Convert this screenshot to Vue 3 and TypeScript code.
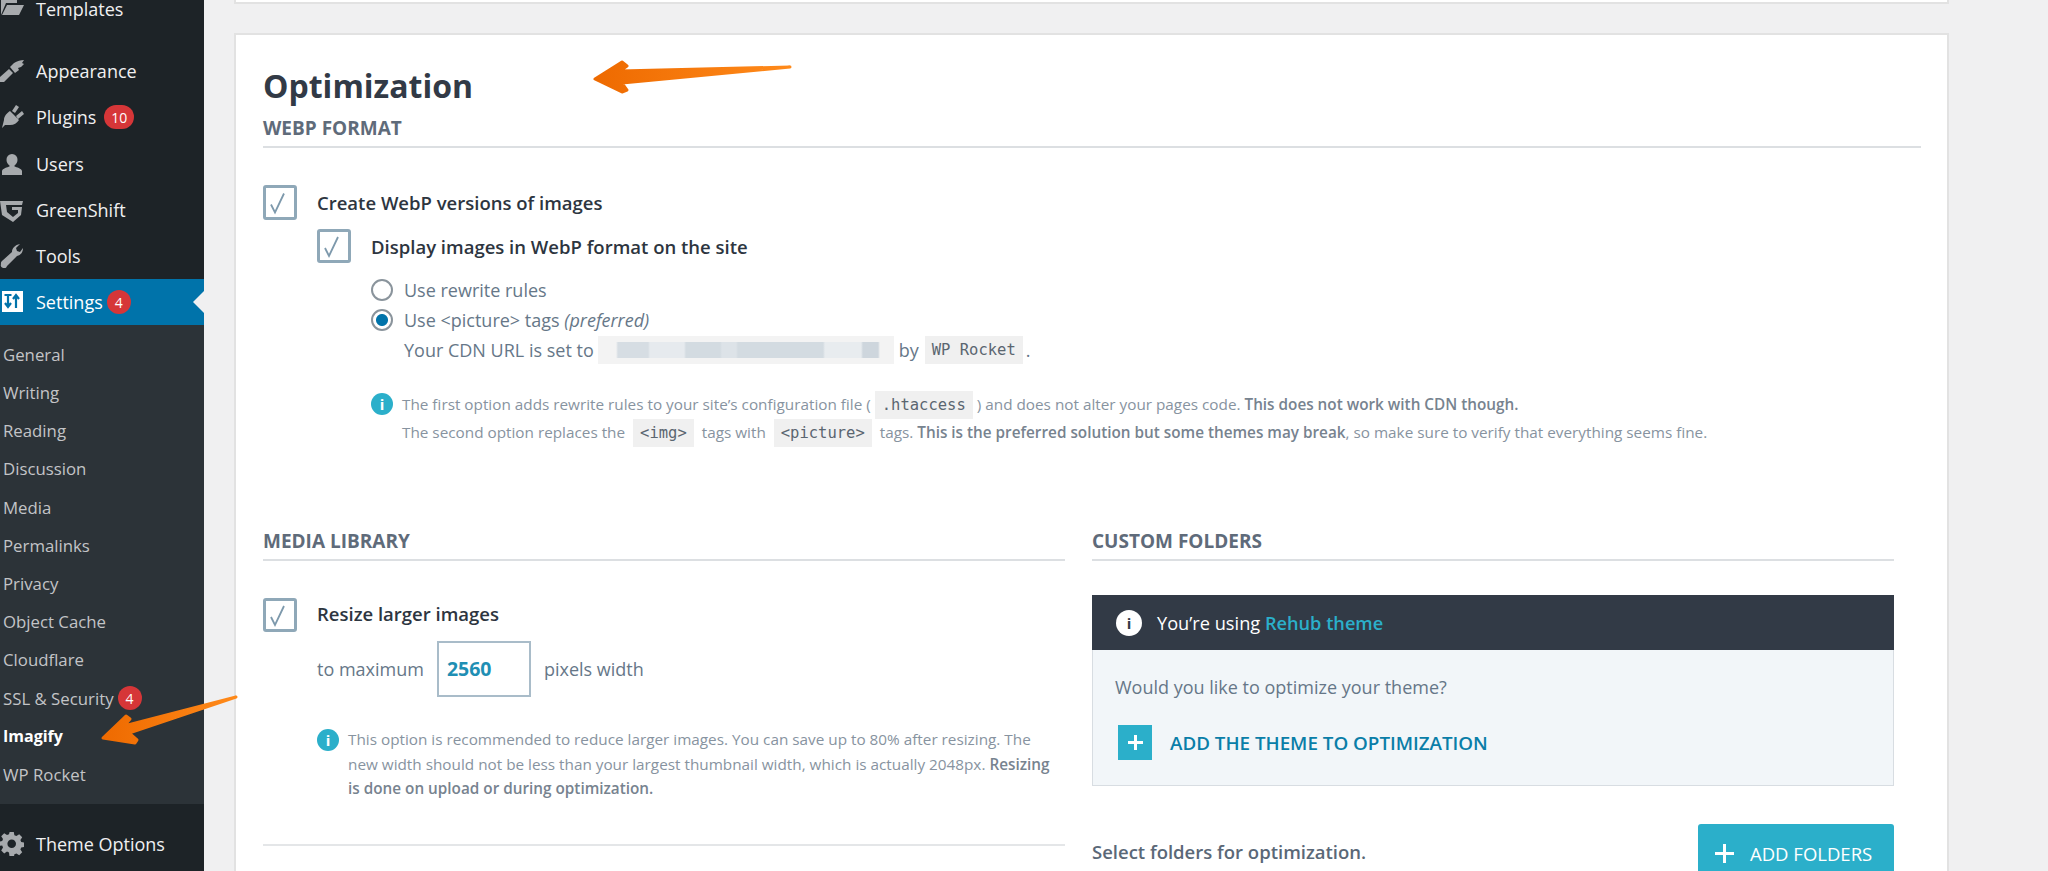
<template>
  <div class="page">
    <!-- admin menu -->
    <aside class="sidebar">
      <a v-for="item in topItems" :key="item.label" class="menu-item" :class="{ current: item.current, gap: item.gap }">
        <svg class="menu-icon" viewBox="0 0 24 24" v-html="item.icon"></svg>
        <span>{{ item.label }}</span>
        <b v-if="item.badge" class="badge" :class="{ wide: item.badge > 9 }">{{ item.badge }}</b>
      </a>
      <div class="submenu">
        <a v-for="sub in subItems" :key="sub.label" class="sub-item" :class="{ active: sub.active }">
          {{ sub.label }}
          <b v-if="sub.badge" class="badge">{{ sub.badge }}</b>
        </a>
      </div>
      <a class="menu-item last">
        <svg class="menu-icon" viewBox="0 0 24 24">
          <path fill="#a7aaad" fill-rule="evenodd" d="M9.600 0h4.200l.6 3.200 2 .8 2.800-1.800 3 3-1.800 2.800.8 2 3.200.6v4.200l-3.200.6-.8 2 1.800 2.800-3 3-2.800-1.800-2 .8-.6 3.200H9.600L9 20.400l-2-.8-2.800 1.800-3-3L3 15.600l-.8-2L0 13.800V9.600l2.200-.6.800-2L1.200 4.200l3-3L7 3l2-.8zM11.700 7.500a4.300 4.300 0 1 0 0 8.600 4.300 4.300 0 0 0 0-8.600z"/>
        </svg>
        <span>Theme Options</span>
      </a>
    </aside>

    <main class="main">
      <div class="top-card"></div>
      <section class="card">
        <h1>Optimization</h1>
        <h2 class="section-title">WEBP FORMAT</h2>

        <div class="check-row first">
          <span class="checkbox tall"><svg viewBox="0 0 28 28"><path d="M5 16l4 8 9-19" /></svg></span>
          <strong>Create WebP versions of images</strong>
        </div>
        <div class="check-row nested">
          <span class="checkbox"><svg viewBox="0 0 28 28"><path d="M5 16l4 8 9-19" /></svg></span>
          <strong>Display images in WebP format on the site</strong>
        </div>

        <div class="radios">
          <div class="radio-row"><span class="radio"></span>Use rewrite rules</div>
          <div class="radio-row"><span class="radio on"></span><span>Use &lt;picture&gt; tags <em>(preferred)</em></span></div>
          <div class="cdn-row">
            <span>Your CDN URL is set to</span><span class="blurred"></span><span>by</span><code>WP Rocket</code><span>.</span>
          </div>
          <div class="note webp-note">
            <span class="info">i</span>
            <p>
              The first option adds rewrite rules to your site’s configuration file (<code>.htaccess</code>) and does not alter your pages code. <b>This does not work with CDN though.</b><br>
              The second option replaces the <code>&lt;img&gt;</code> tags with <code>&lt;picture&gt;</code> tags. <b>This is the preferred solution but some themes may break</b>, so make sure to verify that everything seems fine.
            </p>
          </div>
        </div>

        <div class="columns">
          <div>
            <h2 class="section-title">MEDIA LIBRARY</h2>
            <div class="check-row resize">
              <span class="checkbox"><svg viewBox="0 0 28 28"><path d="M5 16l4 8 9-19" /></svg></span>
              <strong>Resize larger images</strong>
            </div>
            <div class="size-row">
              <span>to maximum</span>
              <span class="size-input">2560</span>
              <span>pixels width</span>
            </div>
            <div class="note resize-note">
              <span class="info">i</span>
              <p>This option is recommended to reduce larger images. You can save up to 80% after resizing. The new width should not be less than your largest thumbnail width, which is actually 2048px. <b>Resizing is done on upload or during optimization.</b></p>
            </div>
            <hr class="divider">
          </div>

          <div>
            <h2 class="section-title">CUSTOM FOLDERS</h2>
            <div class="theme-head">
              <span class="info light">i</span>
              <span>You’re using <b>Rehub theme</b></span>
            </div>
            <div class="theme-body">
              <p>Would you like to optimize your theme?</p>
              <a class="add-theme"><span class="plus-box"><i class="plus"></i></span>ADD THE THEME TO OPTIMIZATION</a>
            </div>
            <div class="folders-row">
              <strong>Select folders for optimization.</strong>
              <button class="add-btn"><i class="plus big"></i>ADD FOLDERS</button>
            </div>
          </div>
        </div>
      </section>
    </main>

    <!-- annotation arrows -->
    <svg class="arrows" viewBox="0 0 2048 871">
      <defs>
        <linearGradient id="orange" x1="0" x2="1" y1="0" y2="0">
          <stop offset="0" stop-color="#ee6a00" />
          <stop offset="1" stop-color="#ff8a1a" />
        </linearGradient>
      </defs>
      <path fill="url(#orange)" stroke="url(#orange)" stroke-linejoin="round" stroke-width="3" d="M595 79L622 62 627 66 620 71 790 67 622 83 627 90 622 92z" />
      <path fill="url(#orange)" stroke="url(#orange)" stroke-linejoin="round" stroke-width="3" d="M103 738L126 716 130 719 124 726 236 697 129 733 137 740 135 743z" />
    </svg>
  </div>
</template>

<script setup lang="ts">
interface MenuItem {
  label: string
  icon: string
  badge?: number
  current?: boolean
  gap?: boolean
}

const shape = (d: string, fill = '#a7aaad') => `<path fill="${fill}" fill-rule="evenodd" d="${d}"/>`

const topItems: MenuItem[] = [
  { label: 'Templates', icon: shape('M1 0h5l2 2h9v4H6L1 18zM7 8h17l-5 10H2z') },
  { label: 'Appearance', gap: true, icon: shape('M0 18L9 10l4 4-9 9H0zM10 8l4-4c3-2 7-3 10-3l-2 3 2 1-3 3-3 1 1 2-4 3z') },
  { label: 'Plugins', badge: 10, icon: shape('M2 23l2-8c0-4 3-7 6-9l9 9c-2 3-5 5-9 5H5zM12 6l4-6 3 2-4 6zM16 11l6-5 2 3-6 5z') },
  { label: 'Users', icon: shape('M12 2a5.500 5.500 0 0 1 5.500 6c0 2.500-1.500 4.500-3 5.500v1c2 .7 7 2 7.500 4.500v4H2v-4c.5-2.500 5.500-3.800 7.500-4.500v-1c-1.500-1-3-3-3-5.500A5.500 5.500 0 0 1 12 2z') },
  { label: 'GreenShift', icon: shape('M0 3h23l-1 4H6l1 7 6 5 5-4v-3h-6V9h10l-1 8-8 7-11-7z') },
  { label: 'Tools', icon: shape('M23 4c0 4-2 7-6 8L7 22a3 3 0 0 1-6-2 3 3 0 0 1 1-3l10-9c0-4 3-7 8-8l-4 4 1 3 3 1z') },
  { label: 'Settings', badge: 4, current: true, icon: '<rect x="2" y="1" width="21" height="21" fill="#fff"/><path stroke="#0073aa" stroke-width="2.200" fill="none" d="M8 6v11M5 13l3 4 3-4M4.500 5h7M16 6v12M13 9l3-4 3 4"/>' },
]

const subItems: { label: string; badge?: number; active?: boolean }[] = [
  { label: 'General' },
  { label: 'Writing' },
  { label: 'Reading' },
  { label: 'Discussion' },
  { label: 'Media' },
  { label: 'Permalinks' },
  { label: 'Privacy' },
  { label: 'Object Cache' },
  { label: 'Cloudflare' },
  { label: 'SSL & Security', badge: 4 },
  { label: 'Imagify', active: true },
  { label: 'WP Rocket' },
]
</script>

<style>
html, body {
  margin: 0;
  background: #f0f0f1;
  overflow: hidden;
}
</style>

<style scoped>
.page {
  position: relative;
  display: flex;
  height: 871px;
  overflow: hidden;
  background: #f0f0f1;
  font-family: "Open Sans", "Noto Sans", sans-serif;
  color: #667788;
}

/* sidebar */
.sidebar {
  flex: 0 0 204px;
  height: 871px;
  background: #1d2327;
  color: #f0f0f1;
  font-size: 18px;
}
.menu-item {
  position: relative;
  display: flex;
  align-items: center;
  height: 46.200px;
  padding-left: 36px;
}
.menu-item:first-child {
  margin-top: -14px;
}
.menu-item.gap {
  margin-top: 16px;
}
.menu-item.last {
  margin-top: 17px;
}
.menu-item.current {
  background: #0073aa;
  color: #fff;
}
.menu-item.current::after {
  content: "";
  position: absolute;
  right: 0;
  top: 12px;
  border: 11px solid transparent;
  border-right-color: #f0f0f1;
  border-left: 0;
}
.menu-icon {
  position: absolute;
  left: 0;
  top: 11px;
  width: 24px;
  height: 24px;
}
.badge {
  display: inline-flex;
  align-items: center;
  justify-content: center;
  width: 24px;
  height: 24px;
  margin-left: 4px;
  border-radius: 12px;
  background: #d63638;
  color: #fff;
  font-size: 14px;
  font-weight: 400;
}
.badge.wide {
  width: 30px;
  margin-left: 8px;
}
.submenu {
  padding: 10px 0;
  background: #2c3338;
}
.sub-item {
  display: flex;
  align-items: center;
  height: 38.200px;
  padding-left: 3px;
  color: #c3c4c7;
  font-size: 16.800px;
}
.sub-item.active {
  color: #fff;
  font-size: 16px;
  font-weight: 700;
}

/* main column */
.main {
  flex: 0 0 1715px;
  margin-left: 30px;
}
.top-card {
  height: 2px;
  background: #fff;
  border: 2px solid #e2e2e2;
  border-width: 0 2px 2px;
}
.card {
  margin-top: 29px;
  height: 900px;
  padding: 0 26px 0 27px;
  background: #fff;
  border: 2px solid #e2e2e2;
}
h1 {
  margin: 29px 0 8px;
  color: #323a46;
  font-size: 32px;
  line-height: 44px;
  font-weight: 700;
}
.section-title {
  margin: 0;
  padding-bottom: 6px;
  border-bottom: 2px solid #dcdfe2;
  color: #5f6b7a;
  font-size: 19px;
  line-height: 24px;
  font-weight: 700;
}
strong {
  color: #2d3540;
  font-size: 18.500px;
  font-weight: 600;
}
.check-row {
  display: flex;
  align-items: center;
  gap: 20px;
}
.check-row.first {
  margin-top: 37px;
}
.check-row.nested {
  margin: 9px 0 0 54px;
}
.check-row.resize {
  margin-top: 37px;
}
.check-row.resize strong,
.folders-row strong {
  margin-bottom: 3px;
}
.checkbox {
  flex: none;
  width: 28px;
  height: 28px;
  border: 3px solid #8fa8b8;
  border-radius: 3px;
}
.checkbox.tall {
  height: 29px;
}
.checkbox svg {
  display: block;
  width: 100%;
  height: 100%;
  fill: none;
  stroke: #7d99ac;
  stroke-width: 1.800;
}
.radios {
  margin: 11px 0 0 108px;
  font-size: 18px;
}
.radio-row {
  display: flex;
  align-items: center;
  gap: 11px;
  height: 31px;
}
.radio-row + .radio-row {
  height: 30px;
}
.radio {
  box-sizing: border-box;
  width: 22px;
  height: 22px;
  border: 2px solid #8a949c;
  border-radius: 50%;
  background: #fff;
}
.radio.on {
  background: radial-gradient(circle, #0073aa 0 5.500px, #fff 6.500px);
}
.cdn-row {
  display: flex;
  align-items: center;
  height: 30px;
  padding-left: 33px;
}
.blurred {
  width: 296px;
  height: 28px;
  margin: 0 5px 0 4px;
  background:
    linear-gradient(90deg, transparent 18px, #d6dde3 20px 50px, #e6eaee 52px 86px, #d3dbe1 88px 122px, #dde3e8 124px 138px, #d3dbe1 140px 225px, #e8ecef 227px 263px, #ced6dd 265px 280px, transparent 282px) 0 6px / 100% 16px no-repeat,
    #f3f3f3;
}
code {
  display: inline-block;
  margin: 0 4px;
  padding: 0 7px;
  background: #f0f0f0;
  color: #5b6670;
  font-family: "DejaVu Sans Mono", "Liberation Mono", monospace;
  font-size: 15.500px;
  line-height: 28px;
}
.cdn-row code {
  margin: 0 3px 0 6px;
}
.note {
  display: flex;
  gap: 9px;
  color: #8793a0;
}
.note p {
  margin: 0;
  font-size: 15.300px;
}
.note b {
  font-weight: 600;
  color: #77838f;
}
.webp-note {
  margin-top: 26px;
}
.webp-note p {
  line-height: 27px;
  white-space: nowrap;
}
.info {
  flex: none;
  display: flex;
  align-items: center;
  justify-content: center;
  width: 22px;
  height: 22px;
  margin-top: 2px;
  border-radius: 50%;
  background: #2bafca;
  color: #fff;
  font-size: 15px;
  font-weight: 700;
}
.info.light {
  width: 26px;
  height: 26px;
  margin: 0;
  background: #fff;
  color: #323a46;
}
.columns {
  display: grid;
  grid-template-columns: 802px 802px;
  gap: 27px;
  margin-top: 82px;
}
.size-row {
  display: flex;
  align-items: center;
  gap: 13px;
  height: 56px;
  margin: 9px 0 0 54px;
  font-size: 18px;
}
.size-input {
  box-sizing: border-box;
  width: 94px;
  height: 56px;
  padding: 14px 8px;
  border: 2px solid #a9bcc9;
  color: #1f8fb4;
  font-size: 19.500px;
  font-weight: 700;
  line-height: 24px;
}
.resize-note {
  margin: 30px 11px 0 54px;
}
.resize-note p {
  line-height: 24.500px;
}
.divider {
  margin: 43px 0 0;
  border: 0;
  border-top: 2px solid #e4e6e8;
}
.theme-head {
  display: flex;
  align-items: center;
  gap: 15px;
  height: 55px;
  margin-top: 34px;
  padding-left: 24px;
  background: #323a46;
  color: #fff;
  font-size: 18.200px;
}
.theme-head b {
  color: #2bafca;
  font-weight: 600;
}
.theme-body {
  box-sizing: border-box;
  height: 136px;
  padding: 24px 22px;
  background: #f2f6f9;
  border: 1px solid #d8dde2;
  border-top: 0;
  font-size: 18px;
}
.theme-body p {
  margin: 0;
  line-height: 26px;
}
.add-theme {
  display: flex;
  align-items: center;
  gap: 18px;
  margin: 25px 0 0 3px;
  color: #0a7ea8;
  font-size: 18.800px;
  font-weight: 600;
}
.plus-box {
  display: flex;
  align-items: center;
  justify-content: center;
  width: 34px;
  height: 35px;
  background: #2bafca;
}
.plus {
  position: relative;
  display: block;
  width: 15px;
  height: 3px;
  background: #fff;
}
.plus::after {
  content: "";
  position: absolute;
  left: 6px;
  top: -6px;
  width: 3px;
  height: 15px;
  background: #fff;
}
.plus.big {
  width: 19px;
  margin-right: 16px;
}
.plus.big::after {
  left: 8px;
  top: -8px;
  height: 19px;
}
.folders-row {
  display: flex;
  justify-content: space-between;
  align-items: center;
  margin-top: 38px;
}
.folders-row strong {
  color: #5a6877;
}
.add-btn {
  display: flex;
  align-items: center;
  width: 196px;
  height: 58px;
  padding: 0 0 0 17px;
  border: 0;
  border-radius: 3px;
  background: #2bafca;
  color: #fff;
  font-family: inherit;
  font-size: 18.500px;
}

.arrows {
  position: absolute;
  left: 0;
  top: 0;
  width: 2048px;
  height: 871px;
  pointer-events: none;
}
</style>
